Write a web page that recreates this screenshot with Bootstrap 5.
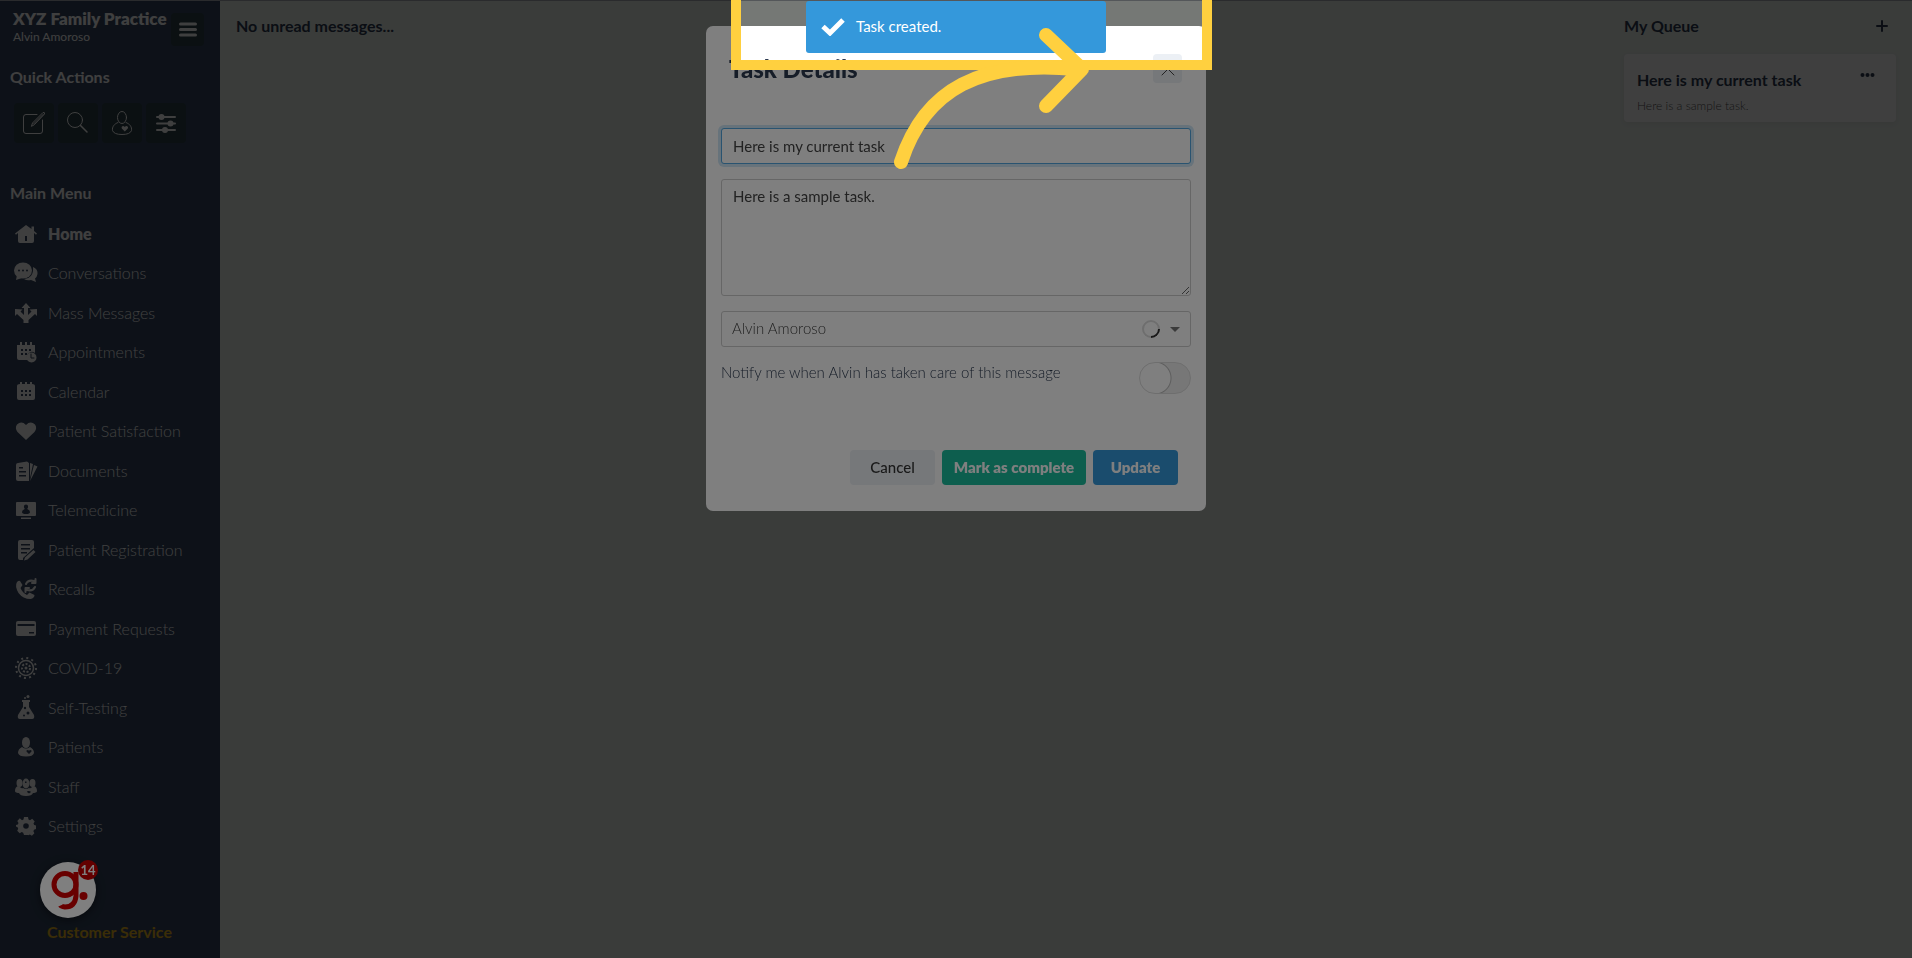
<!DOCTYPE html>
<html lang="en">
<head>
<meta charset="utf-8">
<meta name="viewport" content="width=device-width, initial-scale=1">
<title>XYZ Family Practice</title>
<link href="https://cdn.jsdelivr.net/npm/bootstrap@5.3.0/dist/css/bootstrap.min.css" rel="stylesheet">
<script src="https://cdn.jsdelivr.net/npm/bootstrap@5.3.0/dist/js/bootstrap.bundle.min.js"></script>
<style>
  body { font-family: Lato, "Liberation Sans", sans-serif; font-size: 15px; font-weight: 300; line-height: 20px; background: #eaf1eb; color: #2c3a50; overflow: hidden; }
  h1, h2, h3, p { margin: 0; }
  svg { display: block; fill: currentColor; }
  .ln { fill: none; stroke: currentColor; stroke-linecap: round; stroke-linejoin: round; }
  .cut { fill: #344660; }
  .app { min-height: 100vh; border-top: 1px solid #a8aeb4; }

  .sidebar { width: 220px; background: #344660; color: #fff; }
  .practice { font-size: 17px; line-height: 20px; font-weight: 800; white-space: nowrap; }
  .user-name { font-size: 12px; line-height: 16px; font-weight: 400; }
  .practice, .user-name { margin-left: -3px; }
  .tile { background: #2c4048; color: #fff; border: 0; border-radius: 4px; padding: 0; display: flex; align-items: center; justify-content: center; }
  .tile-menu { width: 33px; height: 33px; }
  .tile-action { width: 40px; height: 40px; }
  .side-title { font-size: 16px; line-height: 20px; font-weight: 700; }
  .quick { margin: 21px 0 0 10px; }
  .actions { margin: 16px 0 0 14px; }
  .main-title { margin: 40px 0 11px 10px; }
  .menu-row { height: 39px; padding: 10px 0 10px 13px; gap: 9px; font-size: 16px; color: #fff; text-decoration: none; }
  .menu-rows > li { height: 39px; }
  .menu-rows > li:nth-child(even) { height: 40px; }
  .menu-row svg { width: 26px; height: 26px; flex: none; }
  .menu-row.current { font-weight: 800; }
  .help-block { margin: 16px 0 0 40px; }
  .help { width: 56px; height: 56px; border-radius: 50%; background: #fff; box-shadow: 0 2px 8px rgba(0,0,0,.5); z-index: 1060; }
  .help-count { position: absolute; top: -2px; right: -2px; width: 20px; height: 20px; border-radius: 50%; background: #c60000; color: #fff; font-size: 13px; font-weight: 700; line-height: 20px; }
  .help-label { margin: 0 0 0 7px; color: #e8b41c; font-size: 16px; font-weight: 700; }

  .unread { font-size: 16px; font-weight: 700; }
  .unread-pane { padding: 15px 16px; }
  .queue { width: 272px; }
  .queue-title { font-size: 16px; font-weight: 700; }
  .queue-head { padding: 15px 8px 0 0; margin-bottom: 19px; }
  .queue-card { background: #fff; border-radius: 4px; padding: 16px 13px 8px; box-shadow: 0 2px 6px rgba(60,70,60,.08); }
  .queue-note { font-size: 12px; line-height: 16px; color: #555; margin-top: 9px; }
  .bare { border: 0; background: none; padding: 0; color: inherit; }

  .task-dialog { margin-top: 26px; margin-bottom: 26px; }
  .task-dialog .modal-content { border: 0; border-radius: 7px; padding: 28px 15px 26px; color: #2c3a50; }
  .task-head { margin-bottom: 45px; padding: 0 9px 0 8px; }
  .task-title { font-size: 24px; line-height: 29px; font-weight: 900; }
  .close-btn { width: 29px; height: 29px; border: 0; border-radius: 4px; background: #ecf0f5; color: #444; padding: 0; display: flex; align-items: center; justify-content: center; }
  .field { font-size: 15px; line-height: 20px; font-weight: 400; color: #444; background-color: #fff; border: 1px solid #ccc; border-radius: 3px; padding: 7px 11px; }
  .field-focus { border-color: #52a7e0; box-shadow: 0 0 0 3px #cfe6f7; }
  .note-box { height: 117px; margin-top: 15px; padding-top: 6px; resize: vertical; }
  .owner-row { margin-top: 15px; }
  .owner { font-weight: 300; padding: 6px 10px 8px; appearance: none; background-image: none; height: 36px; }
  .owner-state { position: absolute; right: 11px; top: 9px; gap: 10px; pointer-events: none; }
  .ring { width: 18px; height: 18px; border: 2px solid #ddd; border-right-color: #333; border-radius: 50%; transform: rotate(45deg); }
  .caret { border: 5px solid transparent; border-top-color: #777; border-bottom: 0; }
  .notify-row { margin-top: 15px; }
  .notify { width: 52px; height: 32px; margin: 0; padding: 0; appearance: none; border: 1px solid #ddd; border-radius: 16px; background: radial-gradient(circle at 15px 15px, #fff 15px, #bbb 16px, #eee 17px); }
  .acts { gap: 7px; margin: 56px 13px 0 0; }
  .act { height: 35px; border: 0; border-radius: 4px; padding: 0 0 1px; font-size: 15px; font-weight: 800; color: #fff; }
  .act-cancel { width: 85px; background: #ecf0f5; color: #333; font-weight: 500; }
  .act-done { width: 144px; background: #1abc9c; }
  .act-update { width: 85px; background: #3498db; }

  /* Walkthrough layer: everything outside the highlighted box is dimmed */
  .spotlight { position: fixed; z-index: 1070; top: -10px; left: calc(50% - 225px); width: 481px; height: 80px; border: 10px solid #ffd03f; box-shadow: 0 0 0 4000px rgba(0,0,0,.5); pointer-events: none; }
  .notice { position: fixed; z-index: 1080; top: 1px; left: calc(50% - 150px); width: 300px; height: 52px; border-radius: 3px; background: #3498db; color: #fff; font-size: 15px; font-weight: 400; padding: 0 15px 2px; gap: 11px; }
  .pointer { position: fixed; z-index: 1090; top: 20px; left: calc(50% - 66px); color: #ffd03f; pointer-events: none; }
</style>
</head>
<body>
<div class="app d-flex align-items-stretch">
  <nav class="sidebar flex-shrink-0 d-flex flex-column" aria-label="Main">
    <header class="d-flex justify-content-between ps-3 pe-3 pt-2">
      <div>
        <h1 class="practice">XYZ Family Practice</h1>
        <p class="user-name">Alvin Amoroso</p>
      </div>
      <button class="tile tile-menu flex-shrink-0 mt-1" type="button" aria-label="Toggle menu">
        <svg width="18" height="16" viewBox="0 0 18 16"><path class="ln" stroke-width="3" d="M1.500 2h15M1.500 7.500h15M1.500 13h15"/></svg>
      </button>
    </header>
    <h2 class="side-title quick">Quick Actions</h2>
    <div class="d-flex gap-1 actions">
      <button class="tile tile-action" type="button" aria-label="New message"><svg width="24" height="24" viewBox="0 0 24 24"><path class="ln" d="M15 3.500H4Q1.500 3.500 1.500 6V20Q1.500 22.500 4 22.500H18Q20.500 22.500 20.500 20V9M9.500 15l1-3L21 1.500q2-.5 1.500 1.500L12.500 13.500zM11.500 13L21 3.500"/></svg></button>
      <button class="tile tile-action" type="button" aria-label="Search"><svg width="24" height="24" viewBox="0 0 24 24"><g class="ln"><circle cx="9" cy="9" r="7.500"/><path d="M14.500 14.500L21 21" stroke-width="1.500"/></g></svg></button>
      <button class="tile tile-action" type="button" aria-label="Patients"><svg width="24" height="26" viewBox="0 0 24 26"><g class="ln"><ellipse cx="12" cy="7.500" rx="4.500" ry="6"/><path d="M8 12.500C4 14 2 17 2.500 20.500Q4 24.500 12 24.500T21.500 20.500C22 17 20 14 16 12.500"/></g><path d="M14.800 21.500l-3-3q-1-2 1-2.600 1.500 0 2 1 .500-1 2-1 2 .600 1 2.600z"/></svg></button>
      <button class="tile tile-action" type="button" aria-label="Filters"><svg width="20" height="20" viewBox="0 0 20 20"><path class="ln" stroke-width="2" d="M1 4h18M1 10.500h18M1 17h18"/><circle cx="5.500" cy="4" r="3"/><circle cx="14.500" cy="10.500" r="3"/><circle cx="9" cy="17" r="3"/></svg></button>
    </div>
    <h2 class="side-title main-title">Main Menu</h2>
    <ul class="menu-rows list-unstyled mb-0">
      <li><a class="menu-row current d-flex align-items-center" href="#"><svg viewBox="0 0 26 26"><path d="M2 12.500L13 4l5.500 4V5.500h2.500V10l3 2.500-1 1.200L21 12v8q0 2-2 2H7q-2 0-2-2v-8l-2 1.700z"/><path class="cut" d="M12 15h2v5h-2z"/></svg>Home</a></li>
      <li><a class="menu-row d-flex align-items-center" href="#"><svg viewBox="0 0 26 26"><path d="M20 7q5 2 4.500 7-.5 3-2.500 4.500l1 3.500-5-2q-4 1-7-1 10-1 9-12z"/><ellipse cx="10" cy="10.500" rx="9" ry="8"/><path d="M4 15l-1 5 6-2z"/><g class="cut"><circle cx="6" cy="10.500" r="1"/><circle cx="10" cy="10.500" r="1"/><circle cx="14" cy="10.500" r="1"/></g></svg>Conversations</a></li>
      <li><a class="menu-row d-flex align-items-center" href="#"><svg viewBox="0 0 26 26"><path d="M13 3l4.500 5H15v7l3.500-3.500-2-2L24 9v7l-2-2-6.500 6v3h-5v-3L4 14l-2 2V9l7.500.5-2 2L11 15V8H8.500z"/></svg>Mass Messages</a></li>
      <li><a class="menu-row d-flex align-items-center" href="#"><svg viewBox="0 0 26 26"><path d="M4 6h3V3h2v3h3V3h2v3h3V3h2v3h3v8a5 5 0 0 0-7 7H6q-2 0-2-2z"/><g class="cut"><path d="M8 10h2v2H8zm4 0h2v2h-2zm4 0h2v2h-2zM8 14h2v2H8zm4 0h2v2h-2z"/></g><circle cx="18.500" cy="18.500" r="5"/><path class="ln" style="stroke:#344660" d="M18 15v4h3"/></svg>Appointments</a></li>
      <li><a class="menu-row d-flex align-items-center" href="#"><svg viewBox="0 0 26 26"><path d="M4 7q0-2 3-2V3h2v2h3V3h2v2h3V3h2v2q3 0 3 2v12q0 2-2 2H6q-2 0-2-2z"/><path class="cut" d="M8 11h2v2H8zm4 0h2v2h-2zm4 0h2v2h-2zM8 15h2v2H8zm4 0h2v2h-2zm4 0h2v2h-2z"/></svg>Calendar</a></li>
      <li><a class="menu-row d-flex align-items-center" href="#"><svg viewBox="0 0 26 26"><path d="M13 22L4.500 14Q1.500 10 4 6.500q4.500-4 9 .5 4.500-4.500 9-.5 2.500 3.500-.5 7.500z"/></svg>Patient Satisfaction</a></li>
      <li><a class="menu-row d-flex align-items-center" href="#"><svg viewBox="0 0 26 26"><path d="M5 5l9-1.500 2 1.500v18H5q-2 0-2-2V7q0-2 2-2zM17 5l3 1-3 14zM21 7l3.500 1.500L17 23z"/><path class="cut" d="M6 9h4v1.500H6zm0 4h7v1.500H6zm0 4h7v1.500H6z"/></svg>Documents</a></li>
      <li><a class="menu-row d-flex align-items-center" href="#"><svg viewBox="0 0 26 26"><path d="M4 5h18q1 0 1 1v12q0 1-1 1H4q-1 0-1-1V6q0-1 1-1zM8 20.500h10V22H8z"/><path class="cut" d="M13 7.500q2.500 0 2 3l-.8 1.500Q17 13 17 15t-4 2-4-2 2.800-3L11 10.500q-.5-3 2-3z"/></svg>Telemedicine</a></li>
      <li><a class="menu-row d-flex align-items-center" href="#"><svg viewBox="0 0 26 26"><path d="M7 3h12q2 0 2 2v6L10 21v2H7q-2 0-2-2V5q0-2 2-2zM20.500 13l2 2-8 7.500-3.500 1 1-3z"/><path class="cut" d="M8 7h9v1.500H8zm0 4h9v1.500H8zm0 4h6v1.500H8z"/></svg>Patient Registration</a></li>
      <li><a class="menu-row d-flex align-items-center" href="#"><svg viewBox="0 0 26 26"><path d="M4 6q2-2 3-1l2.500 4-2 3q2 5 6.500 7l2.500-2.500 5 2.500q0 3-4 4Q10 23 5.500 17 1.500 10 4 6z"/><path class="ln" stroke-width="2" d="M13 8q2-4.500 8-3l1.500 1.500V3m0 4H19M22 11q-2 4.500-8 3l-1.500-1.500V16m0-4H16"/></svg>Recalls</a></li>
      <li><a class="menu-row d-flex align-items-center" href="#"><svg viewBox="0 0 26 26"><rect x="3" y="5" width="20" height="15" rx="2"/><path class="cut" d="M4.500 8h17v2h-17zM16 16h5v1.500h-5z"/></svg>Payment Requests</a></li>
      <li><a class="menu-row d-flex align-items-center" href="#"><svg viewBox="0 0 26 26"><circle class="ln" cx="13" cy="13" r="7.500" stroke-width="1.500"/><g fill="none" stroke="currentColor"><circle cx="13" cy="13" r="10" stroke-width="2" stroke-dasharray="2 3.236"/><circle cx="13" cy="13" r="4" stroke-width="2" stroke-dasharray="2 1.590"/></g><circle cx="13" cy="13" r="1.500"/></svg>COVID-19</a></li>
      <li><a class="menu-row d-flex align-items-center" href="#"><svg viewBox="0 0 26 26"><path d="M9 5h8v2h-1v5l5 8q1 4-2 4H7q-3 0-2-4l5-8V7H9z"/><circle cx="12" cy="3" r="1"/><circle cx="15" cy="1.500" r="1.500"/><g class="cut"><circle cx="12" cy="13" r="1.200"/><circle cx="15" cy="18" r="1.500"/><circle cx="11" cy="20.500" r="1"/></g></svg>Self-Testing</a></li>
      <li><a class="menu-row d-flex align-items-center" href="#"><svg viewBox="0 0 26 26"><ellipse cx="13" cy="8.500" rx="4" ry="5.500"/><path d="M9 13q4 3 8 0 4 2 4 6-1 3.500-8 3.500T5 19q0-4 4-6z"/><path class="cut" d="M16 20l-2.500-2.500q-.5-2.500 2.500-1 3-1.500 2.500 1z"/></svg>Patients</a></li>
      <li><a class="menu-row d-flex align-items-center" href="#"><svg viewBox="0 0 26 26"><ellipse cx="6.500" cy="9" rx="3" ry="4"/><ellipse cx="19.500" cy="9" rx="3" ry="4"/><path d="M5 12l5 3-3 4q-5 0-5-2 0-4 3-5zM21 12l-5 3 3 4q5 0 5-2 0-4-3-5z"/><ellipse cx="13" cy="9.500" rx="3.500" ry="5"/><path d="M10 14q3 2 6 0 4 2 4 5-1 3-7 3t-7-3q0-3 4-5z"/><path class="cut" d="M16 19.500l-2-1.500q0-1.500 2-1t2 1zM12 7.500h1.500V9H12z"/></svg>Staff</a></li>
      <li><a class="menu-row d-flex align-items-center" href="#"><svg viewBox="0 0 26 26"><path d="M11 4h4l.5 2.500 1.500.7 2.200-1.400 2.500 2.700-1.200 2 .7 1.500 1.800.5v3.500l-2 .8-.6 1.500 1 2-2.500 2.500-2-1.200-1.500.6L15 22h-4l-.8-2.300-1.500-.6-2 1.200-2.500-2.500 1-2-.6-1.500-1.600-.8V12l1.800-.5.7-1.500-1.200-2 2.500-2.700L9 7.200l1.500-.7z"/><circle class="cut" cx="13" cy="13" r="2.800"/></svg>Settings</a></li>
    </ul>
    <div class="help-block">
      <button class="help d-block position-relative border-0 p-0" type="button" aria-label="Support, 14 new">
        <svg width="56" height="56" viewBox="0 0 56 56"><g class="ln" style="stroke:#d00000" stroke-width="5"><circle cx="25" cy="22.500" r="11"/><path d="M36 10V34Q35 45 25 45 21 44.500 20.500 43.500" stroke-linecap="butt"/></g><circle cx="43.500" cy="34" r="4" fill="#d00000"/></svg>
        <span class="help-count">14</span>
      </button>
      <p class="help-label pt-1">Customer Service</p>
    </div>
  </nav>

  <main class="flex-grow-1 unread-pane"><h2 class="unread">No unread messages...</h2></main>

  <aside class="queue flex-shrink-0 me-3">
    <div class="d-flex justify-content-between align-items-center queue-head">
      <h2 class="queue-title">My Queue</h2>
      <button class="bare" type="button" aria-label="Add task"><svg width="12" height="12" viewBox="0 0 12 12"><path class="ln" stroke-width="2" d="M1 6h10M6 1v10"/></svg></button>
    </div>
    <article class="queue-card">
      <div class="d-flex justify-content-between align-items-start">
        <h3 class="queue-title">Here is my current task</h3>
        <button class="bare me-2" type="button" aria-label="Task options"><svg width="15" height="12" viewBox="0 0 15 12"><circle cx="2.500" cy="5" r="2"/><circle cx="7.500" cy="5" r="2"/><circle cx="12.500" cy="5" r="2"/></svg></button>
      </div>
      <p class="queue-note">Here is a sample task.</p>
    </article>
  </aside>
</div>

<div class="modal-backdrop show"></div>
<div class="modal show d-block" role="dialog" aria-labelledby="taskTitle">
  <div class="modal-dialog task-dialog">
    <form class="modal-content">
      <div class="d-flex justify-content-between task-head">
        <h2 class="task-title" id="taskTitle">Task Details</h2>
        <button class="close-btn" type="button" aria-label="Close"><svg width="14" height="14" viewBox="0 0 14 14"><path class="ln" d="M1 1l12 12M13 1L1 13"/></svg></button>
      </div>
      <input class="form-control field field-focus" type="text" value="Here is my current task" aria-label="Task name">
      <textarea class="form-control field note-box" aria-label="Task description">Here is a sample task.</textarea>
      <div class="position-relative owner-row">
        <select class="form-select field owner" aria-label="Assigned to"><option>Alvin Amoroso</option></select>
        <span class="owner-state d-flex align-items-center"><span class="ring"></span><span class="caret"></span></span>
      </div>
      <div class="d-flex justify-content-between notify-row">
        <label for="notify">Notify me when Alvin has taken care of this message</label>
        <input class="notify" id="notify" type="checkbox" role="switch">
      </div>
      <div class="d-flex justify-content-end acts">
        <button class="act act-cancel" type="button">Cancel</button>
        <button class="act act-done" type="button">Mark as complete</button>
        <button class="act act-update" type="submit">Update</button>
      </div>
    </form>
  </div>
</div>

<div class="spotlight"></div>
<div class="notice d-flex align-items-center" role="status">
  <svg width="24" height="20" viewBox="0 0 24 20"><path d="M2 10.500L9 17 22 4" fill="none" stroke="#fff" stroke-width="5"/></svg>
  <span>Task created.</span>
</div>
<svg class="pointer" width="200" height="152" viewBox="0 0 200 152" aria-hidden="true"><path class="ln" stroke-width="14" d="M11 142C35 68 92 40 186 49M156 15L192 49 156 86"/></svg>
</body>
</html>
